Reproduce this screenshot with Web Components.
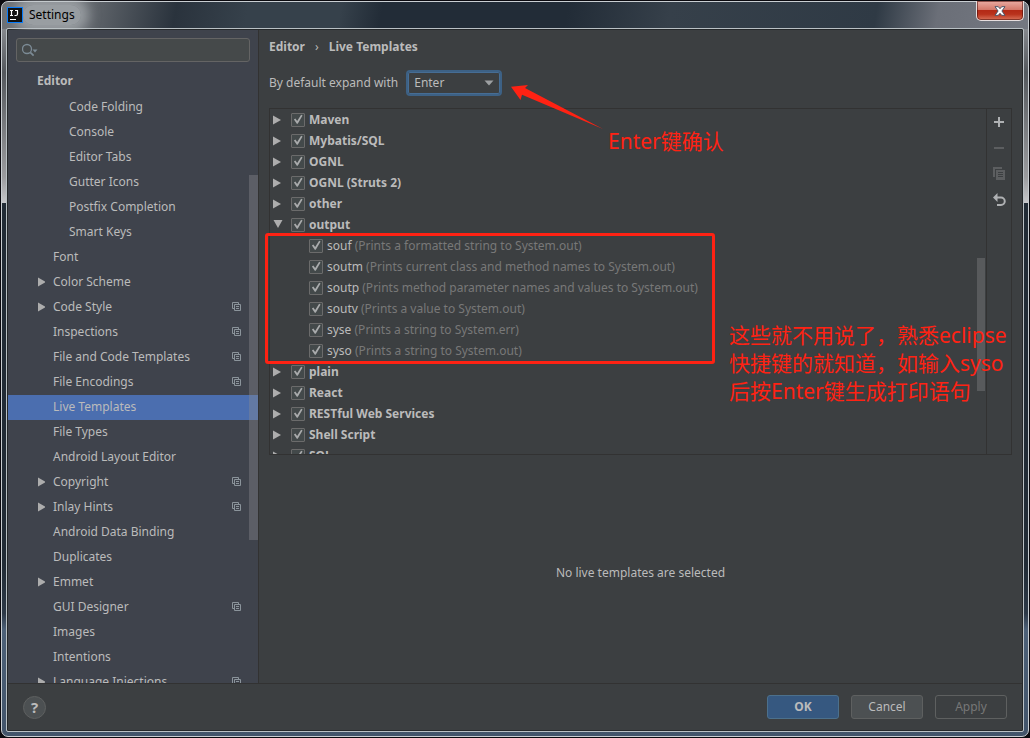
<!DOCTYPE html>
<html lang="en">
<head>
<meta charset="utf-8">
<title>Settings</title>
<style>
  html, body { margin: 0; height: 100%; background: #0b0a0f; }
  body { font-family: "Noto Sans", "Noto Sans CJK SC", sans-serif; font-size: 12px; line-height: 20px; color: #bbbbbb; }
</style>
</head>
<body>
<settings-window></settings-window>

<script>
function define(name, html, setup) {
  const template = document.createElement('template');
  template.innerHTML = html;
  customElements.define(name, class extends HTMLElement {
    connectedCallback() {
      if (this.shadowRoot) return;
      this.attachShadow({ mode: 'open' }).append(template.content.cloneNode(true));
      if (setup) setup(this, this.shadowRoot);
    }
  });
}

define('title-bar', `
  <style>
    :host { display: flex; align-items: center; height: 26px; color: #000; position: relative; }
    .name { padding: 0 6px; border-radius: 10px;
      background: rgba(190,194,198,.55); box-shadow: 0 0 12px 8px rgba(190,194,198,.55); }
    .logo { z-index: 1; margin-left: 1px; }
    button { position: absolute; right: 0; top: -1px; width: 48px; height: 20px; padding: 0;
      border: 1px solid #e6dede; border-top: 0; border-radius: 0 0 5px 5px;
      background: linear-gradient(#e9aca3, #d4796b 45%, #b42a16 50%, #b9321c 70%, #d9735a);
      box-shadow: inset 0 0 0 1px rgba(70,10,5,.55); display: grid; place-items: center; }
  </style>
  <svg class="logo" width="16" height="16" viewBox="0 0 16 16" aria-hidden="true">
    <rect width="16" height="16" fill="#087cfa"/><rect x="1" y="1" width="14" height="14" fill="#111"/>
    <path d="M3 3.500h3M4.500 3.500v5M3 8.500h3M8 3.500h3M10.500 3.500v3.500q0 1.500-1.500 1.500h-1.500M3 12.500h6" stroke="#fff" stroke-width="1.200" fill="none"/>
  </svg>
  <span class="name">Settings</span>
  <button type="button" aria-label="Close">
    <svg width="12" height="10" viewBox="0 0 12 10"><path d="M1 .7h3.300L6 2.700 7.700.7H11L7.900 5 11 9.300H7.700L6 7.300 4.300 9.300H1L4.100 5z" fill="#fff" stroke="#4b5468" stroke-width="1"/></svg>
  </button>`);

define('search-box', `
  <style>
    :host { display: grid; grid-template-columns: 1fr; align-items: center; height: 24px; margin: 0 8px; }
    input, svg { grid-area: 1 / 1; }
    input { box-sizing: border-box; width: 100%; height: 24px; border: 1px solid #646464; border-radius: 3px;
      background: #45494a; color: #bbb; font: inherit; padding: 0 6px 0 26px; outline: 0; }
    svg { margin-left: 6px; pointer-events: none; z-index: 1; }
  </style>
  <input type="text" aria-label="Search settings">
  <svg width="18" height="16" viewBox="0 0 18 16" fill="none" stroke="#7c8b96"><circle cx="5" cy="7" r="4.500" stroke-width="1.300"/><path d="M8.300 10.300l3.300 3.300" stroke-width="1.700"/><path d="M10.500 7.500h5l-2.500 3z" fill="#7c8b96" stroke="none"/></svg>`);

define('nav-item', `
  <style>
    :host { display: flex; align-items: center; height: 25px; box-sizing: border-box; padding: 0 16px 2px 29px; white-space: nowrap; }
    :host([level="0"]) { font-weight: 700; height: 26px; }
    :host([level="2"]) { padding-left: 61px; }
    :host([selected]) { background: #4b6eaf; }
    a { flex: 1; color: inherit; text-decoration: none; }
    svg { display: none; }
    .arrow { width: 8px; height: 10px; margin-right: 8px; }
    :host([arrow]) .arrow, :host([scoped]) .scope { display: block; }
    .spacer { width: 16px; }
    :host([arrow]) .spacer, :host([level="0"]) .spacer, :host([level="2"]) .spacer { display: none; }
  </style>
  <svg class="arrow" viewBox="0 0 8 10"><path d="M1 .5v9l8-4.500z" fill="#adadad"/></svg>
  <span class="spacer"></span>
  <a href="#"><slot></slot></a>
  <svg class="scope" width="10" height="10" viewBox="0 0 10 10" fill="none" stroke="#8b949b"><path d="M2.500 6.500h-2v-6h6v2M2.500 2.500h6v6h-6zM4 4.500h3M4 6.500h3"/></svg>`);

define('nav-tree', `
  <style>
    :host { display: flex; flex-direction: column; background: #3f434c; border-right: 1px solid #323232;
      padding-top: 8px; min-height: 0; position: relative; }
    nav { margin-top: 7px; flex: 1 1 0; overflow: hidden; }
    .thumb { position: absolute; right: 0; top: 145px; width: 9px; height: 365px; background: rgba(140,140,145,.38); }
  </style>
  <search-box></search-box>
  <nav aria-label="Settings sections"></nav>
  <div class="thumb"></div>`, (host, root) => {
  const items = [
    ['Editor', 0], ['Code Folding', 2], ['Console', 2], ['Editor Tabs', 2], ['Gutter Icons', 2],
    ['Postfix Completion', 2], ['Smart Keys', 2], ['Font', 1], ['Color Scheme', 1, 'arrow'],
    ['Code Style', 1, 'arrow scoped'], ['Inspections', 1, 'scoped'], ['File and Code Templates', 1, 'scoped'],
    ['File Encodings', 1, 'scoped'], ['Live Templates', 1, 'selected'], ['File Types', 1],
    ['Android Layout Editor', 1], ['Copyright', 1, 'arrow scoped'], ['Inlay Hints', 1, 'arrow scoped'],
    ['Android Data Binding', 1], ['Duplicates', 1], ['Emmet', 1, 'arrow'], ['GUI Designer', 1, 'scoped'],
    ['Images', 1], ['Intentions', 1], ['Language Injections', 1, 'arrow scoped']
  ];
  root.querySelector('nav').innerHTML = items.map(([text, level, flags = '']) =>
    `<nav-item level="${level}" ${flags}>${text}</nav-item>`).join('');
});

define('expand-select', `
  <style>
    :host { display: flex; align-items: center; gap: 8px; height: 26px; }
    .box { display: grid; align-items: center; justify-items: end; }
    select, svg { grid-area: 1 / 1; }
    select { appearance: none; box-sizing: border-box; width: 96px; height: 26px; border: 2px solid #3d6185;
      border-radius: 4px; background: #3c3f41; color: #bbb; font: inherit; padding: 0 20px 0 6px; outline: 0;
      box-shadow: inset 0 0 0 1px #466d94; }
    svg { margin-right: 8px; pointer-events: none; }
  </style>
  <label for="key">By default expand with</label>
  <span class="box">
    <select id="key"><option>Enter</option><option>Tab</option><option>Space</option></select>
    <svg width="10" height="6" viewBox="0 0 10 6"><path d="M.5.5h9L5 5.500z" fill="#9da0a2"/></svg>
  </span>`);

define('template-row', `
  <style>
    :host { display: flex; align-items: center; height: 21px; white-space: nowrap; padding-left: 2px; }
    :host([child]) { padding-left: 20px; }
    svg { width: 12px; height: 12px; margin-right: 7px; }
    :host([child]) svg { visibility: hidden; }
    :host([open]) svg { transform: rotate(90deg); }
    label { display: flex; align-items: center; gap: 4px; }
    input { appearance: none; box-sizing: border-box; width: 14px; height: 14px; margin: 0; display: grid;
      border: 1px solid #6b6b6b; border-radius: 1px; background: #43494a; }
    input:checked::before { content: ""; background: #a9abac;
      clip-path: polygon(16% 50%, 28% 42%, 43% 62%, 76% 10%, 88% 16%, 48% 86%, 40% 86%); }
    .name { font-weight: 700; }
    :host([child]) .name { font-weight: 400; }
    .note { color: #787878; }
  </style>
  <svg viewBox="0 0 12 12" aria-hidden="true"><path d="M1 1.500v9l8-4.500z" fill="#adadad"/></svg>
  <label><input type="checkbox" checked><span><span class="name"><slot></slot></span> <span class="note"><slot name="note"></slot></span></span></label>`);

define('list-actions', `
  <style>
    :host { display: flex; flex-direction: column; width: 24px; border-left: 1px solid #323232; }
    button { height: 26px; width: 24px; padding: 0; border: 0; background: none; display: grid; place-items: center; }
    svg { width: 16px; height: 16px; fill: none; }
  </style>
  <button type="button" aria-label="Add"><svg viewBox="0 0 16 16"><path d="M3 8h10M8 3v10" stroke="#afb1b3" stroke-width="2"/></svg></button>
  <button type="button" aria-label="Remove" disabled><svg viewBox="0 0 16 16"><path d="M3 8h10" stroke="#5c5e60" stroke-width="2"/></svg></button>
  <button type="button" aria-label="Duplicate" disabled><svg viewBox="0 0 16 16"><path d="M2 11V1h9v2H4v8z" fill="#5c5e60"/><path d="M5 4h9v10H5z" fill="#5c5e60"/><path d="M7 6.500h5M7 8.500h5M7 10.500h5" stroke="#3c3f41"/></svg></button>
  <button type="button" aria-label="Restore defaults"><svg viewBox="0 0 16 16"><path d="M5 5.500h5a3.750 3.750 0 0 1 0 7.500H6" stroke="#afb1b3" stroke-width="2"/><path d="M6.500 1v9L2 5.500z" fill="#afb1b3"/></svg></button>`);

define('template-list', `
  <style>
    :host { display: flex; border: 1px solid #323232; min-height: 0; }
    .rows { flex: 1; min-width: 0; overflow: hidden; position: relative; }
    .thumb { position: absolute; right: 1px; top: 149px; width: 8px; height: 133px; background: #585a5c; }
  </style>
  <div class="rows"></div>
  <list-actions></list-actions>`, (host, root) => {
  const groups = [
    ['Maven'], ['Mybatis/SQL'], ['OGNL'], ['OGNL (Struts 2)'], ['other'],
    ['output', [
      ['souf', '(Prints a formatted string to System.out)'],
      ['soutm', '(Prints current class and method names to System.out)'],
      ['soutp', '(Prints method parameter names and values to System.out)'],
      ['soutv', '(Prints a value to System.out)'],
      ['syse', '(Prints a string to System.err)'],
      ['syso', '(Prints a string to System.out)']
    ]],
    ['plain'], ['React'], ['RESTful Web Services'], ['Shell Script'], ['SQL']
  ];
  root.querySelector('.rows').innerHTML = groups.map(([name, children]) =>
    `<template-row ${children ? 'open' : ''}>${name}</template-row>` + (children || []).map(([key, note]) =>
      `<template-row child>${key}<span slot="note">${note}</span></template-row>`).join('')
  ).join('') + '<div class="thumb"></div>';
});

define('red-notes', `
  <style>
    :host { position: absolute; inset: 0; pointer-events: none; color: #ff2213; font-size: 21px; line-height: 28px; white-space: nowrap; }
    svg, p, .frame { position: absolute; margin: 0; }
    .frame { left: 6px; top: 203px; width: 450px; height: 131px; box-sizing: border-box; border: 3px solid #ff2213; border-radius: 3px; }
    svg { left: 251px; top: 54px; }
    .confirm { left: 349px; top: 97px; }
    .explain { left: 470px; top: 291px; }
  </style>
  <div class="frame"></div>
  <svg width="94" height="48" viewBox="0 0 94 48"><path d="M1 2.700L18 1l-3 3L93 45 12 10.700 10.500 16z" fill="#ff2213"/></svg>
  <p class="confirm">Enter键确认</p>
  <p class="explain">这些就不用说了，熟悉eclipse<br>快捷键的就知道，如输入syso<br>后按Enter键生成打印语句</p>`);

define('template-page', `
  <style>
    :host { display: grid; grid-template-rows: 20px 26px minmax(0, 1fr) 228px; position: relative;
      padding: 6px 10px 0; min-width: 0; min-height: 0; background: #3c3f41; }
    h1 { font-size: inherit; margin: 0; display: flex; gap: 10px; line-height: 22px; }
    .sep { font-weight: 400; }
    expand-select { margin-top: 14px; }
    template-list { margin-top: 26px; }
    .empty { margin: 0; display: grid; place-items: center; padding-top: 8px; }
  </style>
  <h1><span>Editor</span><span class="sep">›</span><span>Live Templates</span></h1>
  <expand-select></expand-select>
  <template-list></template-list>
  <p class="empty">No live templates are selected</p>
  <red-notes></red-notes>`);

define('dialog-button', `
  <style>
    :host { display: block; width: 72px; }
    button { box-sizing: border-box; width: 100%; height: 24px; border: 1px solid #5e6060; border-radius: 3px;
      background: #4c5052; color: #bbb; font: inherit; padding: 0; }
    :host([primary]) button { background: #365880; border-color: #4c708c; font-weight: 700; }
    button:disabled { background: none; color: #777; }
  </style>
  <button type="button"><slot></slot></button>`, (host, root) => {
  root.querySelector('button').disabled = host.hasAttribute('disabled');
});

define('dialog-footer', `
  <style>
    :host { display: flex; align-items: center; gap: 12px; height: 46px; border-top: 1px solid #323232;
      background: #3c3f41; padding: 0 15px; }
    .help { width: 23px; height: 23px; padding: 0; border: 1px solid #5e6060; border-radius: 50%; background: #4c5052;
      color: #bbb; font: 700 15px/20px "Noto Sans", sans-serif; margin-right: auto; }
  </style>
  <button class="help" type="button" aria-label="Help">?</button>
  <dialog-button primary>OK</dialog-button>
  <dialog-button>Cancel</dialog-button>
  <dialog-button disabled>Apply</dialog-button>`);

define('settings-window', `
  <style>
    :host { display: flex; padding: 1px; box-sizing: border-box; height: 100vh; }
    .glass { flex: 1; min-width: 0; display: flex; flex-direction: column; padding: 0 4px 4px; border: 1px solid #c9ced2; border-radius: 7px;
      background:
        linear-gradient(100deg, #6d7176 0, #6d7176 7%, #2a333d 17%, #36414b 24%, #36414b 33%, #222c37 37%, #222c37 55%, #36404a 65%, #2f3a45 85%, #6b6f78 91%, #747881) 0 0 / 100% 27px no-repeat,
        linear-gradient(#85888d, #54585d 25%, #9a9b9e 85%, #c6c7ca) 0 27px / 100% 174px no-repeat,
        linear-gradient(#222c36 68%, #2d3947 77%, #4d6178 80%, #42546a) 0 201px / 100% calc(100% - 201px) no-repeat; }
    .content { flex: 1; min-height: 0; display: grid; grid-template: minmax(0, 1fr) 47px / 251px minmax(0, 1fr);
      border: 1px solid #b9c0c4; box-shadow: inset 0 0 0 1px #25282a; padding: 1px; border-radius: 2px; }
    dialog-footer { grid-column: 1 / -1; }
  </style>
  <div class="glass">
    <title-bar></title-bar>
    <div class="content">
      <nav-tree></nav-tree>
      <template-page></template-page>
      <dialog-footer></dialog-footer>
    </div>
  </div>`);
</script>
</body>
</html>
